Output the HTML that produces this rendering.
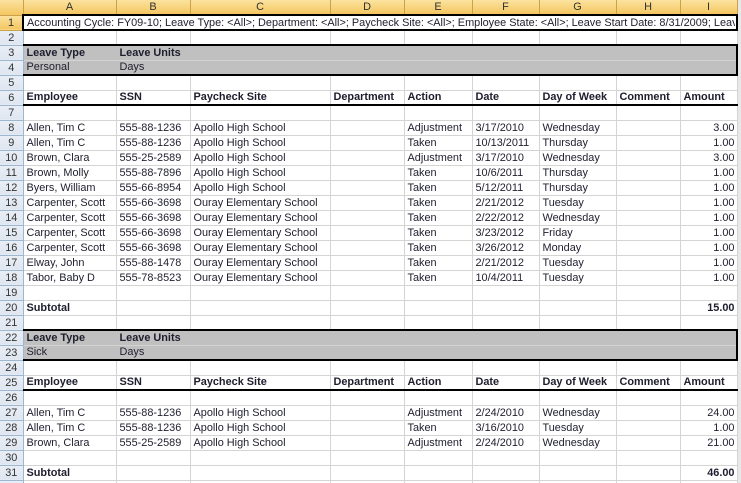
<!DOCTYPE html>
<html><head><meta charset="utf-8"><style>
html,body{margin:0;padding:0;background:#fff;width:741px;height:483px;overflow:hidden;position:relative}
table{border-collapse:collapse;table-layout:fixed;width:737px;font-family:"Liberation Sans",Arial,sans-serif;font-size:10.9px;color:#1e1e2e;position:absolute;left:0;top:0}
tr{height:15px}
td{padding:0 2px 0 3px;border-right:1px solid #d4d4d4;border-bottom:1px solid #d4d4d4;white-space:nowrap;overflow:hidden;line-height:12px}
td.h{background:linear-gradient(#e9eef6,#dfe6f0);color:#333;text-align:center;border-color:#9eb6ce;padding:0}
tr.ch td{background:linear-gradient(#fbe3a0,#f4c660);text-align:center;color:#333;border-color:#c9a24b;padding:0}
td.sel{background:linear-gradient(#fbe3a0,#f4c660)!important;border-color:#c9a24b}
.g td:not(.h){background:#c0c0c0;border-right-color:#c0c0c0}
.b{font-weight:bold}
.r{text-align:right}
.bb td:not(.h){border-bottom:2px solid #000}
.tt{border-top:1px solid #000}
.ov{width:708px;overflow:hidden;white-space:nowrap}
</style></head><body>
<div style="position:absolute;left:737px;top:0;width:4px;height:483px;background:#e8e8e8"></div>
<table>
<colgroup><col style="width:23px"><col style="width:93px"><col style="width:74px"><col style="width:140px"><col style="width:74px"><col style="width:68px"><col style="width:67px"><col style="width:77px"><col style="width:64px"><col style="width:57px"></colgroup>
<tr class="ch"><td></td><td>A</td><td>B</td><td>C</td><td>D</td><td>E</td><td>F</td><td>G</td><td>H</td><td>I</td></tr>
<tr><td class="h sel">1</td><td colspan="9" style="border:2px solid #000"><div class="ov">Accounting Cycle: FY09-10; Leave Type: &lt;All&gt;; Department: &lt;All&gt;; Paycheck Site: &lt;All&gt;; Employee State: &lt;All&gt;; Leave Start Date: 8/31/2009; Leave End Date</div></td></tr>
<tr><td class="h">2</td><td></td><td></td><td></td><td></td><td></td><td></td><td></td><td></td><td></td></tr>
<tr class="g"><td class="h">3</td><td class="b" style="border-top:2px solid #000">Leave Type</td><td class="b" colspan="8" style="border-top:2px solid #000;border-right:2px solid #000">Leave Units</td></tr>
<tr class="g bb"><td class="h">4</td><td>Personal</td><td colspan="8" style="border-right:2px solid #000">Days</td></tr>
<tr><td class="h">5</td><td></td><td></td><td></td><td></td><td></td><td></td><td></td><td></td><td></td></tr>
<tr class="bb b"><td class="h" style="font-weight:normal">6</td><td>Employee</td><td>SSN</td><td>Paycheck Site</td><td>Department</td><td>Action</td><td>Date</td><td>Day of Week</td><td>Comment</td><td>Amount</td></tr>
<tr><td class="h">7</td><td></td><td></td><td></td><td></td><td></td><td></td><td></td><td></td><td></td></tr>
<tr><td class="h">8</td><td>Allen, Tim C</td><td>555-88-1236</td><td>Apollo High School</td><td></td><td>Adjustment</td><td>3/17/2010</td><td>Wednesday</td><td></td><td class="r">3.00</td></tr>
<tr><td class="h">9</td><td>Allen, Tim C</td><td>555-88-1236</td><td>Apollo High School</td><td></td><td>Taken</td><td>10/13/2011</td><td>Thursday</td><td></td><td class="r">1.00</td></tr>
<tr><td class="h">10</td><td>Brown, Clara</td><td>555-25-2589</td><td>Apollo High School</td><td></td><td>Adjustment</td><td>3/17/2010</td><td>Wednesday</td><td></td><td class="r">3.00</td></tr>
<tr><td class="h">11</td><td>Brown, Molly</td><td>555-88-7896</td><td>Apollo High School</td><td></td><td>Taken</td><td>10/6/2011</td><td>Thursday</td><td></td><td class="r">1.00</td></tr>
<tr><td class="h">12</td><td>Byers, William</td><td>555-66-8954</td><td>Apollo High School</td><td></td><td>Taken</td><td>5/12/2011</td><td>Thursday</td><td></td><td class="r">1.00</td></tr>
<tr><td class="h">13</td><td>Carpenter, Scott</td><td>555-66-3698</td><td>Ouray Elementary School</td><td></td><td>Taken</td><td>2/21/2012</td><td>Tuesday</td><td></td><td class="r">1.00</td></tr>
<tr><td class="h">14</td><td>Carpenter, Scott</td><td>555-66-3698</td><td>Ouray Elementary School</td><td></td><td>Taken</td><td>2/22/2012</td><td>Wednesday</td><td></td><td class="r">1.00</td></tr>
<tr><td class="h">15</td><td>Carpenter, Scott</td><td>555-66-3698</td><td>Ouray Elementary School</td><td></td><td>Taken</td><td>3/23/2012</td><td>Friday</td><td></td><td class="r">1.00</td></tr>
<tr><td class="h">16</td><td>Carpenter, Scott</td><td>555-66-3698</td><td>Ouray Elementary School</td><td></td><td>Taken</td><td>3/26/2012</td><td>Monday</td><td></td><td class="r">1.00</td></tr>
<tr><td class="h">17</td><td>Elway, John</td><td>555-88-1478</td><td>Ouray Elementary School</td><td></td><td>Taken</td><td>2/21/2012</td><td>Tuesday</td><td></td><td class="r">1.00</td></tr>
<tr><td class="h">18</td><td>Tabor, Baby D</td><td>555-78-8523</td><td>Ouray Elementary School</td><td></td><td>Taken</td><td>10/4/2011</td><td>Tuesday</td><td></td><td class="r">1.00</td></tr>
<tr><td class="h">19</td><td></td><td></td><td></td><td></td><td></td><td></td><td></td><td></td><td></td></tr>
<tr><td class="h">20</td><td class="b">Subtotal</td><td></td><td></td><td></td><td></td><td></td><td></td><td></td><td class="r b tt">15.00</td></tr>
<tr><td class="h">21</td><td></td><td></td><td></td><td></td><td></td><td></td><td></td><td></td><td></td></tr>
<tr class="g"><td class="h">22</td><td class="b" style="border-top:2px solid #000">Leave Type</td><td class="b" colspan="8" style="border-top:2px solid #000;border-right:2px solid #000">Leave Units</td></tr>
<tr class="g bb"><td class="h">23</td><td>Sick</td><td colspan="8" style="border-right:2px solid #000">Days</td></tr>
<tr><td class="h">24</td><td></td><td></td><td></td><td></td><td></td><td></td><td></td><td></td><td></td></tr>
<tr class="bb b"><td class="h" style="font-weight:normal">25</td><td>Employee</td><td>SSN</td><td>Paycheck Site</td><td>Department</td><td>Action</td><td>Date</td><td>Day of Week</td><td>Comment</td><td>Amount</td></tr>
<tr><td class="h">26</td><td></td><td></td><td></td><td></td><td></td><td></td><td></td><td></td><td></td></tr>
<tr><td class="h">27</td><td>Allen, Tim C</td><td>555-88-1236</td><td>Apollo High School</td><td></td><td>Adjustment</td><td>2/24/2010</td><td>Wednesday</td><td></td><td class="r">24.00</td></tr>
<tr><td class="h">28</td><td>Allen, Tim C</td><td>555-88-1236</td><td>Apollo High School</td><td></td><td>Taken</td><td>3/16/2010</td><td>Tuesday</td><td></td><td class="r">1.00</td></tr>
<tr><td class="h">29</td><td>Brown, Clara</td><td>555-25-2589</td><td>Apollo High School</td><td></td><td>Adjustment</td><td>2/24/2010</td><td>Wednesday</td><td></td><td class="r">21.00</td></tr>
<tr><td class="h">30</td><td></td><td></td><td></td><td></td><td></td><td></td><td></td><td></td><td></td></tr>
<tr><td class="h">31</td><td class="b">Subtotal</td><td></td><td></td><td></td><td></td><td></td><td></td><td></td><td class="r b tt">46.00</td></tr>
<tr><td class="h">32</td><td></td><td></td><td></td><td></td><td></td><td></td><td></td><td></td><td></td></tr>
</table>
</body></html>
